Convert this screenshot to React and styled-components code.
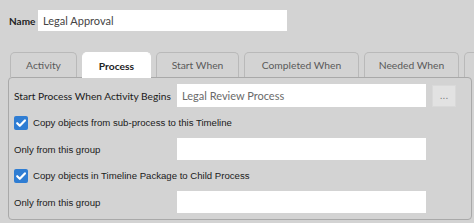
import styled, { createGlobalStyle } from 'styled-components';

const GlobalStyle = createGlobalStyle`
    html, body {
        margin: 0;
        padding: 0;
        background: #d3d3d3;
        overflow: hidden;
    }
    body {
        font-family: "Liberation Sans", Arial, sans-serif;
    }
`;

const tabs = [
    { name: 'Activity', w: 67 },
    { name: 'Process', w: 69 },
    { name: 'Start When', w: 83 },
    { name: 'Completed When', w: 115 },
    { name: 'Needed When', w: 95 },
    { name: '', w: 90 },
];

const Check = () => (
    <CheckBox>
        <svg width="14" height="14" viewBox="0 0 14 14">
            <rect x="0" y="0" width="14" height="14" rx="2" fill="#2f7dd3" />
            <path d="M3.2 7.2 L5.8 9.8 L10.9 4.4" fill="none" stroke="#fff" strokeWidth="2.2" strokeLinecap="round" strokeLinejoin="round" />
        </svg>
    </CheckBox>
);

const App = () => {
    return <Page>
        <GlobalStyle />
        <NameRow>
            <NameLabel>Name</NameLabel>
            <TextInput $w={249} $h={21} value="Legal Approval" readOnly />
        </NameRow>
        <TabBar>
            {tabs.map((t, i) => (
                <Tab key={i} $w={t.w} $active={t.name === 'Process'}>{t.name}</Tab>
            ))}
        </TabBar>
        <Panel>
            <Row>
                <Label $ui>Start Process When Activity Begins</Label>
                <TextInput $w={249} $h={23} $color="#6a6a6a" value="Legal Review Process" readOnly />
                <DotsButton>...</DotsButton>
            </Row>
            <CheckRow>
                <Check />
                <CheckText>Copy objects from sub-process to this Timeline</CheckText>
            </CheckRow>
            <Row>
                <Label>Only from this group</Label>
                <TextInput $w={249} $h={22} readOnly />
            </Row>
            <CheckRow>
                <Check />
                <CheckText>Copy objects in Timeline Package to Child Process</CheckText>
            </CheckRow>
            <Row>
                <Label>Only from this group</Label>
                <TextInput $w={249} $h={22} readOnly />
            </Row>
        </Panel>
    </Page>;
};

const Page = styled.div`
    width: 474px;
    height: 223px;
    padding: 10px 0 0 8px;
    box-sizing: border-box;
    overflow: hidden;
`;

const NameRow = styled.div`
    display: flex;
    align-items: center;
`;

const NameLabel = styled.span`
    width: 29px;
    padding-left: 1px;
    font-family: Lato, "Liberation Sans", sans-serif;
    font-size: 10px;
    font-weight: 700;
    color: #222;
`;

const TextInput = styled.input`
    width: ${(p) => p.$w}px;
    height: ${(p) => p.$h}px;
    box-sizing: border-box;
    border: none;
    outline: none;
    background: #fff;
    padding: 0 5px;
    margin: 0;
    font-family: Lato, "Liberation Sans", sans-serif;
    font-size: 11px;
    color: ${(p) => p.$color || '#444'};
`;

const TabBar = styled.div`
    display: flex;
    gap: 5px;
    margin-top: 21px;
    padding-left: 2px;
    width: 560px;
    position: relative;
    z-index: 1;
`;

const Tab = styled.div`
    flex: none;
    width: ${(p) => p.$w}px;
    box-sizing: border-box;
    display: flex;
    align-items: center;
    justify-content: center;
    white-space: nowrap;
    border: 1px solid ${(p) => (p.$active ? '#fff' : '#b9b9b9')};
    border-bottom: none;
    border-radius: 5px 5px 0 0;
    background: ${(p) => (p.$active ? '#fff' : '#d3d3d3')};
    font-family: Lato, "Liberation Sans", sans-serif;
    font-size: 10.3px;
    font-weight: ${(p) => (p.$active ? 700 : 400)};
    color: ${(p) => (p.$active ? '#222' : '#5a5a5a')};
    margin-bottom: ${(p) => (p.$active ? '-1px' : '0')};
    height: ${(p) => (p.$active ? '26px' : '25px')};
`;

const Panel = styled.div`
    width: 464px;
    height: 143px;
    box-sizing: border-box;
    border: 1px solid #a9a9a9;
    border-radius: 4px;
    padding: 6px 0 0 5px;
    display: flex;
    flex-direction: column;
    gap: 7px;
`;

const Row = styled.div`
    display: flex;
    align-items: center;
`;

const Label = styled.span`
    width: 163px;
    flex: none;
    white-space: nowrap;
    font-family: ${(p) => (p.$ui ? 'Lato, "Liberation Sans", sans-serif' : '"Liberation Sans", Arial, sans-serif')};
    font-size: ${(p) => (p.$ui ? '10.2px' : '9.6px')};
    color: #1a1a1a;
`;

const DotsButton = styled.div`
    width: 24px;
    height: 22px;
    margin-left: 6px;
    background: #e2e2e2;
    border: 1px solid #d9d9d9;
    box-sizing: border-box;
    display: flex;
    align-items: center;
    justify-content: center;
    font-size: 10px;
    color: #777;
`;

const CheckRow = styled.div`
    display: flex;
    align-items: center;
    height: 17px;
    gap: 5px;
`;

const CheckBox = styled.span`
    display: flex;
    width: 14px;
    height: 14px;
`;

const CheckText = styled.span`
    font-family: "Liberation Sans", Arial, sans-serif;
    font-size: 9.6px;
    color: #1a1a1a;
`;

export default App;
